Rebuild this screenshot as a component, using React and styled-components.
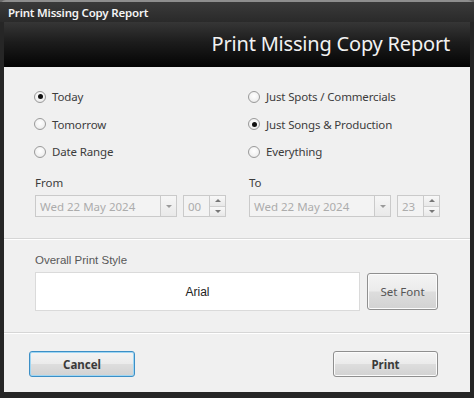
import React from "react";
import styled, { createGlobalStyle } from "styled-components";

const UI = `"Noto Sans", "Open Sans", sans-serif`;
const ARIAL = `"Liberation Sans", Arial, sans-serif`;

const Global = createGlobalStyle`
  html, body { margin: 0; padding: 0; background: #6a6a6a; }
  body { width: 474px; height: 398px; overflow: hidden; }
  * { box-sizing: border-box; }
`;

const Window = styled.div`
  width: 474px;
  height: 398px;
  display: flex;
  flex-direction: column;
  background: #262626;
  border-top: 2px solid #8e8e8e;
  border-radius: 6px 6px 0 0;
  padding: 0 4px 6px 4px;
`;

const TitleBar = styled.div`
  height: 20px;
  display: flex;
  align-items: center;
  background: linear-gradient(#3a3a3a, #2a2a2a);
  margin: 0 -4px;
  padding-left: 8px;
  color: #f4f4f4;
  font-family: ${UI};
  font-size: 11.5px;
  font-weight: 600;
  letter-spacing: -0.2px;
`;

const Header = styled.div`
  height: 45px;
  display: flex;
  align-items: center;
  justify-content: flex-end;
  padding-right: 20px;
  padding-bottom: 2px;
  background: linear-gradient(#363636 0%, #1c1c1c 45%, #040404 100%);
  color: #f2f2f2;
  font-family: ${UI};
  font-size: 20px;
  letter-spacing: -0.2px;
`;

const Body = styled.div`
  flex: 1;
  background: #f0f0f0;
  display: flex;
  flex-direction: column;
`;

const Section = styled.div`
  padding: ${(p) => p.$pad};
  border-bottom: ${(p) => (p.$sep ? "1px solid #d6d6d6" : "none")};
  box-shadow: ${(p) => (p.$sep ? "0 1px 0 #ffffff" : "none")};
`;

const Columns = styled.div`
  display: grid;
  grid-template-columns: 214px 1fr;
`;

const Column = styled.div`
  display: flex;
  flex-direction: column;
`;

const RadioRow = styled.label`
  height: 27.5px;
  display: flex;
  align-items: center;
  gap: 6px;
  margin-left: -1px;
  font-family: ${UI};
  font-size: 11.5px;
  letter-spacing: -0.15px;
  color: #3c3c3c;
`;

const RadioCircle = styled.span`
  width: 12px;
  height: 12px;
  border-radius: 50%;
  border: 1px solid #9a9a9a;
  background: radial-gradient(circle at 50% 40%, #ffffff 0%, #f1f1f1 60%, #dedede 100%);
  display: flex;
  align-items: center;
  justify-content: center;
  &::after {
    content: "";
    width: 5px;
    height: 5px;
    border-radius: 50%;
    background: ${(p) => (p.$checked ? "#111" : "transparent")};
  }
`;

const FieldLabel = styled.div`
  height: 16px;
  margin-top: 8.5px;
  display: flex;
  align-items: center;
  font-family: ${UI};
  font-size: 11.5px;
  color: #3c3c3c;
`;

const DateRow = styled.div`
  margin-top: 5px;
  display: flex;
  gap: 6px;
  height: 22px;
`;

const Combo = styled.div`
  width: 142px;
  display: flex;
  border: 1px solid #cacaca;
  background: #f3f3f3;
`;

const ComboText = styled.div`
  flex: 1;
  display: flex;
  align-items: center;
  padding-left: 4px;
  font-family: ${UI};
  font-size: 11.5px;
  color: #acacac;
`;

const DropBtn = styled.div`
  width: 16px;
  border-left: 1px solid #cacaca;
  background: linear-gradient(#f6f6f6, #e9e9e9);
  display: flex;
  align-items: center;
  justify-content: center;
  &::after {
    content: "";
    border-left: 3px solid transparent;
    border-right: 3px solid transparent;
    border-top: 3px solid #9a9a9a;
  }
`;

const Spinner = styled.div`
  width: 43px;
  display: flex;
  border: 1px solid #cacaca;
  background: #f3f3f3;
`;

const SpinArrows = styled.div`
  width: 16px;
  border-left: 1px solid #cacaca;
  display: flex;
  flex-direction: column;
`;

const SpinHalf = styled.div`
  flex: 1;
  display: flex;
  align-items: center;
  justify-content: center;
  background: linear-gradient(#f8f8f8, #e8e8e8);
  border-top: ${(p) => (p.$down ? "1px solid #cfcfcf" : "none")};
  &::after {
    content: "";
    border-left: 3px solid transparent;
    border-right: 3px solid transparent;
    ${(p) => (p.$down ? "border-top: 3px solid #777;" : "border-bottom: 3px solid #777;")}
  }
`;

const StyleLabel = styled.div`
  height: 16px;
  display: flex;
  align-items: center;
  font-family: ${ARIAL};
  font-size: 11.5px;
  color: #585858;
`;

const FontRow = styled.div`
  margin-top: 4px;
  display: flex;
  align-items: center;
  gap: 7px;
`;

const FontBox = styled.div`
  width: 325px;
  height: 39px;
  background: #ffffff;
  border: 1px solid #dadada;
  display: flex;
  align-items: center;
  justify-content: center;
  font-family: ${ARIAL};
  font-size: 12px;
  color: #222;
`;

const Button = styled.button`
  width: ${(p) => p.$w}px;
  height: ${(p) => p.$h}px;
  border-radius: 3px;
  border: 1px solid ${(p) => (p.$focus ? "#3c8fc6" : "#8f8f8f")};
  box-shadow: ${(p) =>
    p.$focus ? "inset 0 0 0 1px #9fd6f3" : "inset 0 0 0 1px #fbfbfb"};
  background: linear-gradient(#f4f4f4 0%, #ebebeb 48%, #dddddd 52%, #d2d2d2 100%);
  font-family: ${UI};
  font-size: 11.5px;
  font-weight: ${(p) => (p.$bold ? 700 : 400)};
  color: ${(p) => (p.$bold ? "#3a3a3a" : "#555")};
  padding: 0;
  cursor: default;
`;

const ButtonBar = styled.div`
  display: flex;
  justify-content: space-between;
`;

const radiosLeft = [
  { label: "Today", checked: true },
  { label: "Tomorrow" },
  { label: "Date Range" },
];
const radiosRight = [
  { label: "Just Spots / Commercials" },
  { label: "Just Songs & Production", checked: true },
  { label: "Everything" },
];

function DateField({ label, date, hour }) {
  return (
    <>
      <FieldLabel>{label}</FieldLabel>
      <DateRow>
        <Combo>
          <ComboText>{date}</ComboText>
          <DropBtn />
        </Combo>
        <Spinner>
          <ComboText>{hour}</ComboText>
          <SpinArrows>
            <SpinHalf />
            <SpinHalf $down />
          </SpinArrows>
        </Spinner>
      </DateRow>
    </>
  );
}

export default function App() {
  return (
    <>
      <Global />
      <Window>
        <TitleBar>Print Missing Copy Report</TitleBar>
        <Header>Print Missing Copy Report</Header>
        <Body>
          <Section $sep $pad="16px 0 21px 31px">
            <Columns>
              <Column>
                {radiosLeft.map((r) => (
                  <RadioRow key={r.label}>
                    <RadioCircle $checked={r.checked} />
                    {r.label}
                  </RadioRow>
                ))}
                <DateField label="From" date="Wed 22 May 2024" hour="00" />
              </Column>
              <Column>
                {radiosRight.map((r) => (
                  <RadioRow key={r.label}>
                    <RadioCircle $checked={r.checked} />
                    {r.label}
                  </RadioRow>
                ))}
                <DateField label="To" date="Wed 22 May 2024" hour="23" />
              </Column>
            </Columns>
          </Section>
          <Section $sep $pad="13px 32px 21px 31px">
            <StyleLabel>Overall Print Style</StyleLabel>
            <FontRow>
              <FontBox>Arial</FontBox>
              <Button $w={71} $h={37}>Set Font</Button>
            </FontRow>
          </Section>
          <Section $pad="18px 32px 0 25px">
            <ButtonBar>
              <Button $w={106} $h={26} $bold $focus>Cancel</Button>
              <Button $w={105} $h={26} $bold>Print</Button>
            </ButtonBar>
          </Section>
        </Body>
      </Window>
    </>
  );
}
